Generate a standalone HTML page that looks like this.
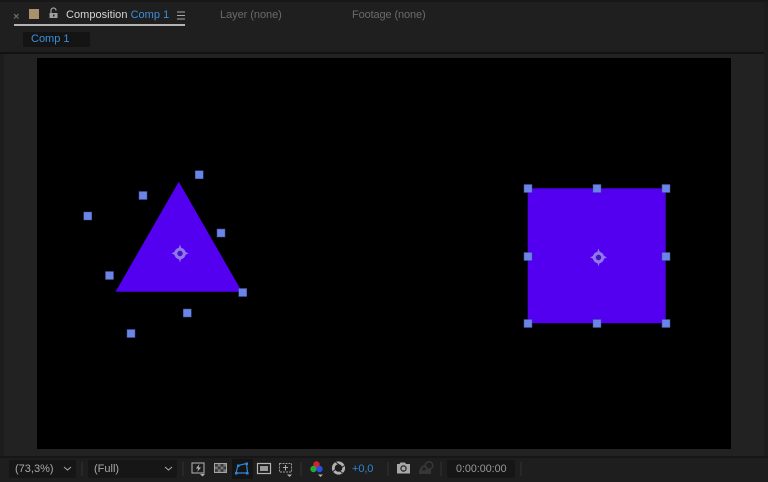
<!DOCTYPE html>
<html>
<head>
<meta charset="utf-8">
<style>
html,body{margin:0;padding:0;background:#1a1a1a}
#p{position:relative;width:768px;height:482px;overflow:hidden;background:#1c1c1c;font-family:"Liberation Sans",sans-serif;filter:blur(.3px)}
.t{position:absolute;white-space:nowrap;font-size:11px;line-height:14px}
.b{position:absolute}
svg{position:absolute;left:0;top:0}
</style>
</head>
<body>
<div id="p">
<div class="b" style="left:0;top:0;width:768px;height:2px;background:#171717"></div>
<div class="b" style="left:0;top:2px;width:764px;height:50px;background:#1f1f1f"></div>
<div class="b" style="left:0;top:52px;width:764px;height:2px;background:#121212"></div>
<div class="b" style="left:4px;top:54px;width:760px;height:403px;background:#222"></div>
<div class="b" style="left:37px;top:58px;width:694px;height:391px;background:#000"></div>
<div class="b" style="left:0;top:457px;width:768px;height:25px;background:#1e1e1e"></div>
<div class="b" style="left:0;top:456px;width:768px;height:2px;background:#161616"></div>

<div class="b" style="left:29px;top:9px;width:10px;height:10px;background:#a8926d"></div>
<div class="t" style="left:66px;top:8px;color:#d6d6d6;letter-spacing:.03px">Composition <span style="color:#3b8edb">Comp 1</span></div>
<div class="t" style="left:220px;top:8px;color:#6a6a6a;letter-spacing:-.05px">Layer (none)</div>
<div class="t" style="left:352px;top:8px;color:#6a6a6a;letter-spacing:-.12px">Footage (none)</div>
<div class="b" style="left:14px;top:24px;width:171px;height:2px;background:#b4b4b4"></div>
<div class="b" style="left:23px;top:32px;width:67px;height:15px;background:#141414"></div>
<div class="t" style="left:31px;top:32px;color:#3b8edb">Comp 1</div>

<div class="b" style="left:9px;top:460px;width:67px;height:18px;background:#161616;border-radius:2px"></div>
<div class="b" style="left:88px;top:460px;width:89px;height:18px;background:#161616;border-radius:2px"></div>
<div class="b" style="left:232px;top:459px;width:21px;height:20px;background:#141414"></div>
<div class="b" style="left:447px;top:460px;width:68px;height:18px;background:#161616;border-radius:2px"></div>
<div class="t" style="left:15px;top:462px;color:#a8a8a8">(73,3%)</div>
<div class="t" style="left:94px;top:462px;color:#a8a8a8">(Full)</div>
<div class="t" style="left:352px;top:462px;color:#2f86d8;letter-spacing:-.1px">+0,0</div>
<div class="t" style="left:456px;top:462px;color:#999;font-size:10.700px">0:00:00:00</div>

<svg width="768" height="482" viewBox="0 0 768 482">
  <!-- header icons -->
  <path d="M14 14L18.500 18.500M18.500 14L14 18.500" stroke="#777" stroke-width="1" fill="none"/>
  <path d="M51 13V10.500a2.500 2.500 0 0 1 5 0" stroke="#a0a0a0" stroke-width="1.200" fill="none"/>
  <rect x="49.500" y="13" width="8" height="5" fill="#a0a0a0"/>
  <rect x="53" y="14.500" width="1.500" height="2" fill="#222"/>
  <path d="M177 12H185M177 15.500H185M177 19H185" stroke="#a8a8a8" stroke-width="1.100" fill="none"/>

  <!-- shapes -->
  <polygon points="178.800,181.700 115.500,291.800 242,291.800" fill="#5300f0"/>
  <rect x="527.700" y="188.300" width="138" height="134.900" fill="#5300f0"/>

  <!-- anchor points -->
  <g fill="#8f78ea">
    <path d="M180 244.500L182 250L188.500 253.500L182 256L180 262.500L178 256L171.500 253.500L178 250Z"/>
    <path d="M598.500 248.500L600.500 254L607 257.500L600.500 260L598.500 266.500L596.500 260L590 257.500L596.500 254Z"/>
  </g>
  <g fill="#8f78ea" stroke="#8f78ea" stroke-width="1.500">
    <circle cx="180" cy="253.500" r="5"/>
    <circle cx="598.500" cy="257.500" r="5"/>
  </g>
  <g fill="#4a12c8" stroke="#3a10b0" stroke-width="0.500">
    <circle cx="180" cy="253.500" r="2.500"/>
    <circle cx="598.500" cy="257.500" r="2.500"/>
  </g>

  <!-- handles -->
  <g fill="#6a85e6" stroke="#3f4f9a" stroke-width="0.500">
    <rect x="195.200" y="170.700" width="8" height="8"/>
    <rect x="139" y="191.500" width="8" height="8"/>
    <rect x="83.700" y="212" width="8" height="8"/>
    <rect x="217" y="229" width="8" height="8"/>
    <rect x="105.500" y="271.500" width="8" height="8"/>
    <rect x="238.700" y="288.500" width="8" height="8"/>
    <rect x="183.300" y="309" width="8" height="8"/>
    <rect x="127" y="329.500" width="8" height="8"/>
    <rect x="524" y="184.500" width="8" height="8"/>
    <rect x="593" y="184.500" width="8" height="8"/>
    <rect x="662" y="184.500" width="8" height="8"/>
    <rect x="524" y="252.500" width="8" height="8"/>
    <rect x="662" y="252.500" width="8" height="8"/>
    <rect x="524" y="319.500" width="8" height="8"/>
    <rect x="593" y="319.500" width="8" height="8"/>
    <rect x="662" y="319.500" width="8" height="8"/>
  </g>

  <!-- chevrons -->
  <path d="M64 467L67.500 470L71 467M165 467L168.500 470L172 467" stroke="#a0a0a0" stroke-width="1.100" fill="none"/>

  <!-- separators -->
  <g stroke="#2c2c2c" stroke-width="1.500">
    <path d="M82 462V476M183 462V476M301 462V476M388 462V476M441 462V476M521 462V476"/>
  </g>

  <!-- fast preview -->
  <rect x="192" y="463" width="12" height="10" fill="none" stroke="#a8a8a8" stroke-width="1.100"/>
  <path d="M199.500 464L196 468.500H198.500L197 472L201 467.500H198.500Z" fill="#c0c0c0"/>
  <path d="M200 474H205L202.500 476.500Z" fill="#b0b0b0"/>

  <!-- transparency grid -->
  <rect x="214" y="463" width="13" height="10" fill="#777"/>
  <g fill="#3a3a3a">
    <rect x="215" y="464" width="2.800" height="2.600"/><rect x="220.600" y="464" width="2.800" height="2.600"/>
    <rect x="217.800" y="466.600" width="2.800" height="2.600"/><rect x="223.400" y="466.600" width="2.800" height="2.600"/>
    <rect x="215" y="469.200" width="2.800" height="2.600"/><rect x="220.600" y="469.200" width="2.800" height="2.600"/>
  </g>
  <rect x="214.500" y="463.500" width="12" height="9" fill="none" stroke="#a5a5a5"/>

  <!-- mask path -->
  <path d="M236 473L238 465.500L246.500 463.500L247.500 473Z" fill="none" stroke="#2f86d8" stroke-width="1.200"/>
  <g fill="#2f86d8">
    <rect x="235" y="472" width="2.500" height="2.500"/><rect x="246" y="472" width="2.500" height="2.500"/>
    <rect x="237" y="464.500" width="2.500" height="2.500"/><rect x="245.500" y="462.500" width="2.500" height="2.500"/>
  </g>

  <!-- region -->
  <rect x="257.500" y="463.500" width="13" height="10" fill="none" stroke="#b5b5b5" stroke-width="1.200"/>
  <rect x="260" y="466" width="8" height="5" fill="#9a9a9a"/>

  <!-- 3d guides -->
  <rect x="279.500" y="463.500" width="12" height="8.500" fill="none" stroke="#9a9a9a" stroke-dasharray="2 1"/>
  <path d="M285.500 465V470.500M283 467.500H288" stroke="#b0b0b0"/>
  <path d="M287 474.500H292L289.500 477Z" fill="#b0b0b0"/>

  <!-- color channels -->
  <circle cx="316.500" cy="464.500" r="3.200" fill="#d8202a"/>
  <circle cx="313.500" cy="469" r="3.200" fill="#25a83a"/>
  <circle cx="319.500" cy="469" r="3.200" fill="#2a4fe0"/>
  <path d="M318 474.500H323L320.500 477Z" fill="#b0b0b0"/>

  <!-- exposure aperture -->
  <circle cx="338.500" cy="468" r="5.200" fill="none" stroke="#b0b0b0" stroke-width="2.800"/>
  <path d="M335.500 462L340.500 466M344.500 465.500L340 469M342.500 473L338.500 470M333 471.500L337 468" stroke="#1e1e1e" stroke-width="0.900"/>
  <circle cx="338.500" cy="468" r="2.500" fill="#1e1e1e"/>

  <!-- camera -->
  <path d="M397 464H399.500L400.500 462.500H405L406 464H410V473.500H397Z" fill="#a8a8a8"/>
  <circle cx="403.500" cy="468.500" r="2.600" fill="#a8a8a8" stroke="#222" stroke-width="1.200"/>

  <!-- show snapshot -->
  <circle cx="429" cy="465.500" r="3.800" fill="none" stroke="#363636" stroke-width="1.600"/>
  <path d="M419 469.500H431V474H419Z" fill="#363636"/>
  <circle cx="424" cy="469" r="3.800" fill="#363636"/>
  <circle cx="424" cy="469" r="1.600" fill="#1e1e1e"/>
</svg>
</div>
</body>
</html>
